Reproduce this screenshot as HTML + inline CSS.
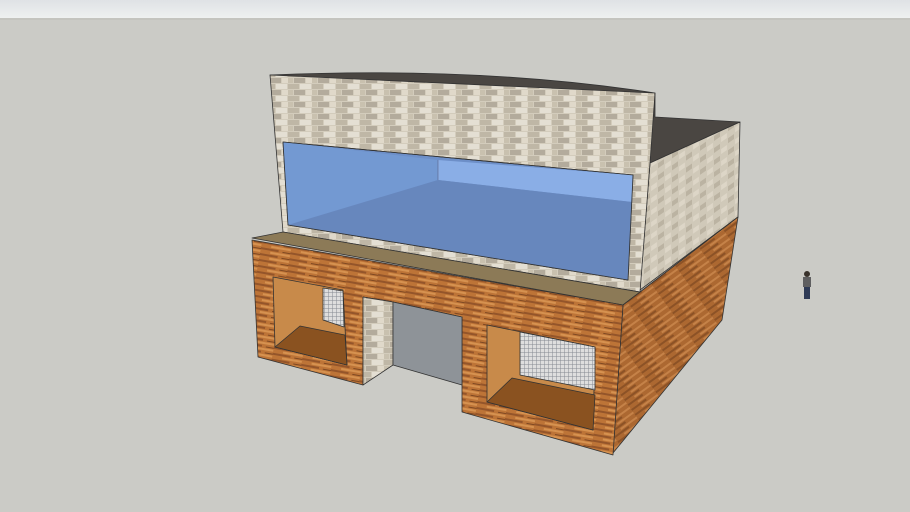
<!DOCTYPE html>
<html><head><meta charset="utf-8"><style>
html,body{margin:0;padding:0;width:910px;height:512px;overflow:hidden;background:#cbcbc6}
.bar{position:absolute;left:0;top:0;width:910px;height:18px;background:linear-gradient(#dfe2e5,#eef0f0)}
.bar2{position:absolute;left:0;top:18px;width:910px;height:2px;background:#c4c4bf}
svg{position:absolute;left:0;top:0}
</style></head><body>
<div class="bar"></div><div class="bar2"></div>
<svg width="910" height="512" viewBox="0 0 910 512">
<defs>
<pattern id="stone" width="24" height="12" patternUnits="userSpaceOnUse">
<rect width="24" height="12" fill="#d3ccbc"/>
<rect x="0" y="0" width="11" height="5" fill="#bfb7a6"/>
<rect x="12" y="0" width="11" height="5" fill="#e4dfd3"/>
<rect x="6" y="6" width="11" height="5" fill="#b3ab9c"/>
<rect x="18" y="6" width="6" height="5" fill="#e0d9ca"/>
<rect x="0" y="6" width="5" height="5" fill="#c9c1af"/>
</pattern>
<pattern id="stoneR" width="14" height="12" patternUnits="userSpaceOnUse" patternTransform="skewY(-35)">
<rect width="14" height="12" fill="#d0c9b9"/>
<rect x="0" y="0" width="6" height="5" fill="#bbb3a2"/>
<rect x="7" y="6" width="6" height="5" fill="#ddd6c7"/>
</pattern>
<pattern id="wood" width="30" height="6" patternUnits="userSpaceOnUse" patternTransform="rotate(10)">
<rect width="30" height="6" fill="#bd7437"/>
<rect x="0" y="0" width="18" height="2" fill="#94552a"/>
<rect x="10" y="3" width="20" height="2" fill="#d69250"/>
<rect x="22" y="1" width="8" height="1" fill="#7e4822"/>
</pattern>
<pattern id="woodR" width="30" height="6" patternUnits="userSpaceOnUse" patternTransform="rotate(-36)">
<rect width="30" height="6" fill="#ac6831"/>
<rect x="0" y="0" width="18" height="2" fill="#8c5226"/>
<rect x="10" y="3" width="20" height="2" fill="#c58248"/>
</pattern>
<pattern id="mesh" width="4" height="4" patternUnits="userSpaceOnUse">
<rect width="4" height="4" fill="#dedede"/>
<path d="M0 0H4M0 0V4" stroke="#858a92" stroke-width="1"/>
</pattern>
</defs>
<g stroke="#333" stroke-width="0.8" stroke-linejoin="round">
<path d="M270 75 Q480 66 655 93 L655 117 L740 122 L650 163 Z" fill="#4a4642"/>
<polygon points="650,163 740,122 738,217 640,290" fill="url(#stoneR)"/>
<polygon points="270,75 655,93 650,163 640,292 283,232" fill="url(#stone)"/>
<polygon points="283,142 633,175 628,280 288,225" fill="#6d8fc8"/>
<polygon points="283,142 438,160 438,180 288,225" fill="#7399d2" stroke="none"/>
<polygon points="438,160 633,175 632,202 438,180" fill="#8aaee6" stroke="none"/>
<polygon points="438,180 632,202 628,280 288,225" fill="#6787bd" stroke="none"/>
<polygon points="283,142 633,175 628,280 288,225" fill="none"/>
<line x1="438" y1="160" x2="438" y2="180" stroke="#557" stroke-width="0.5"/>
<polygon points="252,238 283,232 640,292 738,217 623,305" fill="#8c7a57"/>
<polygon points="623,305 738,217 722,320 613,453" fill="url(#woodR)"/>
<polygon points="252,240 623,305 613,455 462,412 462,317 393,302 363,297 363,385 258,357" fill="url(#wood)"/>
<polygon points="363,297 393,302 393,365 363,385" fill="url(#stone)"/>
<polygon points="393,302 462,317 462,385 393,365" fill="#8e9398"/>
<polygon points="273,277 343,290 347,365 275,347" fill="#c88a4a"/>
<polygon points="323,288 343,291 344,327 323,320" fill="url(#mesh)"/>
<polygon points="275,347 300,326 345,335 347,365" fill="#8a5220"/>
<polygon points="487,325 595,347 593,430 487,402" fill="#c88a4a"/>
<polygon points="520,332 595,347 595,390 520,375" fill="url(#mesh)"/>
<polygon points="487,402 512,378 595,395 593,430" fill="#8a5220"/>
</g>
<g>
<circle cx="807" cy="274" r="3" fill="#3a332c"/>
<rect x="803" y="277" width="8" height="10" fill="#5f5f60"/>
<rect x="804" y="287" width="6" height="12" fill="#2e3a55"/>
</g>
</svg>
</body></html>
